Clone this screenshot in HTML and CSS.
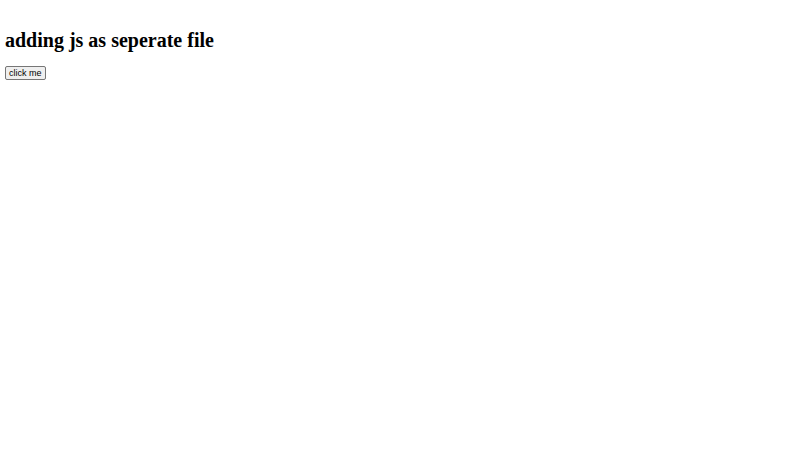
FILE: index.html
```html
<!DOCTYPE html>
<html>
<head>
<meta charset="utf-8">
<title>adding js</title>
<link rel="stylesheet" href="styles.css">
</head>
<body class="page">
<h1 class="title">adding js as seperate file</h1>
<button class="btn">click me</button>
</body>
</html>
```
FILE: styles.css
```css
.page {
  margin: 16px 5px 5px;
  font-family: "Liberation Serif", serif;
  background: #fff;
  color: #000;
}
.title {
  font-size: 20px;
  font-weight: bold;
  margin: 13.4px 0 14px;
}
.btn {
  display: block;
  font-family: "Liberation Sans", Arial, sans-serif;
  font-size: 9px;
  line-height: 12px;
  padding: 0 3px;
  border: 1px solid #767676;
  border-radius: 2px;
  background: #efefef;
  color: #000;
}
```
